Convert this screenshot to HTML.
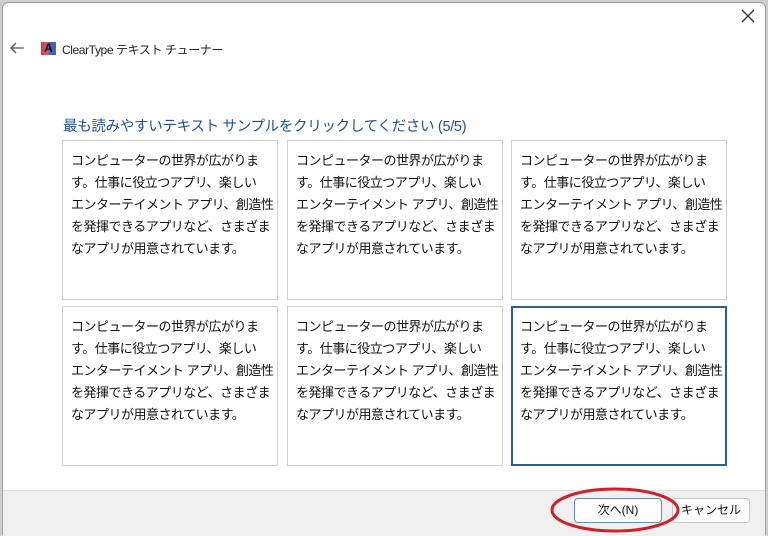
<!DOCTYPE html><html><head><meta charset="utf-8"><style>
body{margin:0;width:768px;height:535px;overflow:hidden;background:#cfcfcf;font-family:"Liberation Sans","Noto Sans CJK JP",sans-serif;position:relative}
.win{position:absolute;left:2px;top:2px;width:764px;height:533px;background:#fff;border:1px solid #a0a0a0;border-radius:6px 6px 0 0;box-sizing:border-box}
.foot{position:absolute;left:3px;top:490px;width:762px;height:45px;background:#f0f0f0;border-top:1px solid #e0e0e0}
.box{position:absolute;width:216px;height:160px;border:1px solid #cfcfcf;box-sizing:border-box;padding:9px 0 0 8px;font-size:13px;letter-spacing:-0.5px;line-height:22px;color:#111;white-space:nowrap;overflow:hidden}
.sel{border:2px solid #2b5f8c;padding:8px 0 0 7px}
.btn{position:absolute;top:498px;height:25px;border:1px solid #c8c8c8;border-radius:4px;background:#fdfdfd;box-sizing:border-box;font-size:12px;text-align:center;line-height:23px;color:#111}
</style></head><body>
<div class="win"></div>
<div class="foot"></div>
<svg style="position:absolute;left:741px;top:9px" width="14" height="14"><path d="M1 1L13 13M13 1L1 13" stroke="#333" stroke-width="1.3"/></svg>
<svg style="position:absolute;left:9px;top:42px" width="16" height="12"><path d="M15 6H2M7 1L2 6L7 11" stroke="#555" stroke-width="1.3" fill="none"/></svg>
<div style="position:absolute;left:41px;top:42px;width:15px;height:13px;background:linear-gradient(90deg,#d33 0,#c66 40%,#55a 60%,#36c 100%);color:#111;font-size:12px;line-height:13px;text-align:center;font-weight:bold">A</div>
<div style="position:absolute;left:62px;top:41px;font-size:12px;letter-spacing:-0.4px;color:#222">ClearType テキスト チューナー</div>
<div style="position:absolute;left:63px;top:115px;font-size:14.5px;letter-spacing:-0.3px;color:#1f4fa0">最も読みやすいテキスト サンプルをクリックしてください (5/5)</div>
<div class="box" style="left:62px;top:140px">コンピューターの世界が広がりま<br>す。仕事に役立つアプリ、楽しい<br>エンターテイメント アプリ、創造性<br>を発揮できるアプリなど、さまざま<br>なアプリが用意されています。</div>
<div class="box" style="left:287px;top:140px">コンピューターの世界が広がりま<br>す。仕事に役立つアプリ、楽しい<br>エンターテイメント アプリ、創造性<br>を発揮できるアプリなど、さまざま<br>なアプリが用意されています。</div>
<div class="box" style="left:511px;top:140px">コンピューターの世界が広がりま<br>す。仕事に役立つアプリ、楽しい<br>エンターテイメント アプリ、創造性<br>を発揮できるアプリなど、さまざま<br>なアプリが用意されています。</div>
<div class="box" style="left:62px;top:306px">コンピューターの世界が広がりま<br>す。仕事に役立つアプリ、楽しい<br>エンターテイメント アプリ、創造性<br>を発揮できるアプリなど、さまざま<br>なアプリが用意されています。</div>
<div class="box" style="left:287px;top:306px">コンピューターの世界が広がりま<br>す。仕事に役立つアプリ、楽しい<br>エンターテイメント アプリ、創造性<br>を発揮できるアプリなど、さまざま<br>なアプリが用意されています。</div>
<div class="box sel" style="left:511px;top:306px">コンピューターの世界が広がりま<br>す。仕事に役立つアプリ、楽しい<br>エンターテイメント アプリ、創造性<br>を発揮できるアプリなど、さまざま<br>なアプリが用意されています。</div>
<div class="btn" style="left:574px;width:88px;border-color:#6a8fb3">次へ(N)</div>
<div class="btn" style="left:672px;width:78px">キャンセル</div>
<svg style="position:absolute;left:548px;top:486px" width="134" height="49"><ellipse cx="67" cy="24" rx="63" ry="21" fill="none" stroke="#d0202a" stroke-width="3"/></svg>
</body></html>
